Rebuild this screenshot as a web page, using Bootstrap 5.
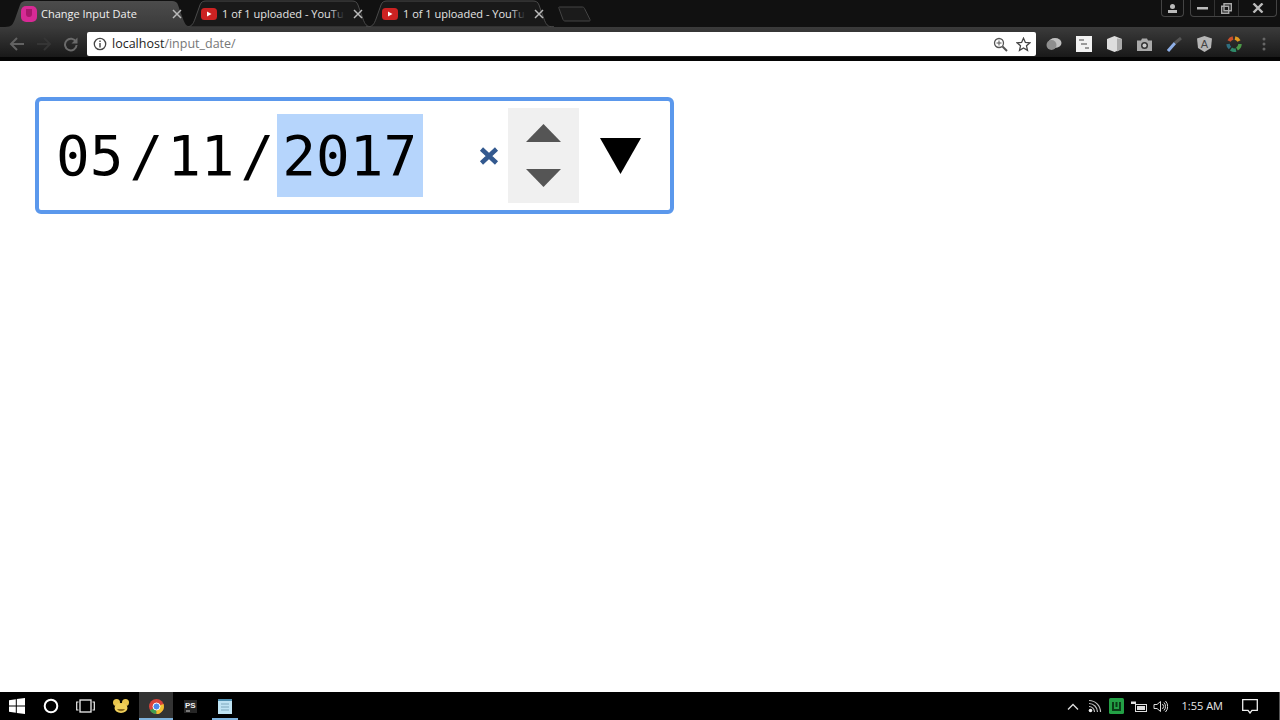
<!DOCTYPE html>
<html lang="en">
<head>
    <meta charset="UTF-8">
    <title>Change Input Date</title>
    <link href="https://cdn.jsdelivr.net/npm/bootstrap@5.3.2/dist/css/bootstrap.min.css" rel="stylesheet">
    <style>
        html, body { height: 720px; overflow: hidden; }
        body { font-family: "Open Sans", "Liberation Sans", sans-serif; background: #fff; }
        svg { display: block; flex: none; }

        /* browser frame */
        .tab-strip { height: 27px; background: #111; padding-left: 5px; }
        .tab-item { position: relative; flex: none; width: 190px; height: 27px; margin-right: -9px; padding: 0 16px; color: #e4e4e4; font-size: 11px; }
        .tab-item.is-active { color: #f0f0f0; z-index: 2; margin-right: -10px; }
        .tab-shape { position: absolute; left: 0; top: 0; }
        .tab-fav { position: relative; margin-right: 5px; }
        .is-active .tab-fav { margin-right: 4px; }
        .tab-label { position: relative; flex: none; width: 123px; padding-top: 1px; white-space: nowrap; }
        .is-active .tab-label { width: 123px; }
        .tab-fade { position: absolute; right: -2px; top: 0; bottom: 0; width: 17px; background: linear-gradient(90deg, rgba(25,25,25,0), #191919 85%); }
        .tab-close { position: relative; margin-left: 8px; }
        .tab-new { margin: 5px 0 0 11px; }
        .win-user { width: 23px; height: 17px; border: 1px solid #444; border-top: 0; border-radius: 0 0 4px 4px; margin-right: 6px; }
        .win-btns { width: 87px; height: 17px; border: 1px solid #444; border-top: 0; border-radius: 0 0 4px 4px; margin-right: 3px; }
        .win-btn { width: 24px; height: 16px; border-right: 1px solid #333; }
        .tool-bar { height: 30px; background: linear-gradient(#3b3b3b, #191919); padding: 5px 0 1px 9px; }
        .nav-ico { flex: none; width: 24px; margin-right: 3px; }
        .omni-box { flex: none; width: 949px; height: 24px; margin-left: -3px; background: #fff; border-radius: 2px; padding: 0 5px 0 6px; font-size: 12.5px; color: #222; }
        .omni-path { color: #777; }
        .omni-url { margin-left: 5px; }
        .ext-row { height: 24px; margin-left: 3px; }
        .ext-slot { width: 30px; }
        .frame-edge { height: 4px; background: #050505; }

        /* date control */
        .date-wrap { margin: 36px 0 0 35px; width: 639px; height: 117px; border: 4px solid #5b98ec; border-radius: 6px; padding-left: 12px; background: #fff; font-family: "DejaVu Sans Mono", "Liberation Mono", monospace; font-size: 56px; line-height: 83px; color: #000; }
        .date-seg { padding: 0 5px; }
        .date-seg.is-selected { background: #b6d5fc; padding: 0 6px 0 5px; margin-left: 4px; }
        .date-sep { margin: 0 -1px 0 1px; }
        .date-clear { margin-left: 56px; }
        .date-spin { width: 71px; height: 95px; margin-left: 9px; background: #f0f0f0; padding: 16px 0; }
        .date-drop { margin-left: 21px; }

        /* taskbar */
        .task-bar { position: absolute; left: 0; right: 0; bottom: 0; height: 28px; background: #000; color: #e8e8e8; font-size: 11px; border-right: 1px solid #555; }
        .task-item { height: 28px; width: 34px; }
        .task-item.is-open { box-shadow: inset 0 -2px 0 #7fb3dd; }
        .task-item.is-current { background: #333; }
        .task-mouse-item { width: 37px; }
        .task-note-item { width: 26px; margin-left: 5px; }
        .tray-slot { width: 22px; }
        .tray-clock { margin-left: 10px; }
        .tray-note { margin: 0 21px 0 19px; }
    </style>
</head>
<body>
    <div class="tab-strip d-flex align-items-start">
        <div class="tab-item is-active d-flex align-items-center">
            <svg class="tab-shape" width="190" height="27"><defs><linearGradient id="tabFill" x1="0" y1="0" x2="0" y2="1"><stop offset="0" stop-color="#4c4c4c"/><stop offset="1" stop-color="#3b3b3b"/></linearGradient></defs><path d="M0 27c7 0 8-3 10-8l5-14c1-3 3-4 6-4h146c3 0 5 1 6 4l5 14c2 5 3 8 10 8z" fill="url(#tabFill)"/></svg>
            <svg class="tab-fav" width="16" height="16"><rect width="16" height="16" rx="5" fill="#d72a95"/><path d="M5 3v5a3 3 0 0 0 6 0V3" fill="#a8176c"/></svg>
            <span class="tab-label">Change Input Date</span>
            <svg class="tab-close" width="10" height="10"><path d="M1 1l8 8M9 1l-8 8" stroke="#bbb" stroke-width="1.500"/></svg>
        </div>
        <div class="tab-item d-flex align-items-center">
            <svg class="tab-shape" width="190" height="27"><path d="M0 27c7 0 8-3 10-8l5-14c1-3 3-4 6-4h146c3 0 5 1 6 4l5 14c2 5 3 8 10 8z" fill="#191919" stroke="#4a4a4a"/></svg>
            <svg class="tab-fav" width="16" height="16"><rect y="2" width="16" height="12" rx="3.500" fill="#cc2222"/><path d="M6 5.500l4.500 2.500-4.500 2.500z" fill="#fff"/></svg>
            <span class="tab-label">1 of 1 uploaded - YouTul<span class="tab-fade"></span></span>
            <svg class="tab-close" width="10" height="10"><path d="M1 1l8 8M9 1l-8 8" stroke="#bbb" stroke-width="1.500"/></svg>
        </div>
        <div class="tab-item d-flex align-items-center">
            <svg class="tab-shape" width="190" height="27"><path d="M0 27c7 0 8-3 10-8l5-14c1-3 3-4 6-4h146c3 0 5 1 6 4l5 14c2 5 3 8 10 8z" fill="#191919" stroke="#4a4a4a"/></svg>
            <svg class="tab-fav" width="16" height="16"><rect y="2" width="16" height="12" rx="3.500" fill="#cc2222"/><path d="M6 5.500l4.500 2.500-4.500 2.500z" fill="#fff"/></svg>
            <span class="tab-label">1 of 1 uploaded - YouTul<span class="tab-fade"></span></span>
            <svg class="tab-close" width="10" height="10"><path d="M1 1l8 8M9 1l-8 8" stroke="#bbb" stroke-width="1.500"/></svg>
        </div>
        <svg class="tab-new" width="34" height="18"><path d="M1.500 2h23c1 0 1.500.5 2 1.500l5.500 11c.5 1 0 1.500-1 1.500H7c-1 0-1.500-.5-2-1.500L1 3.500C.5 2.500.5 2 1.500 2z" fill="#1b1b1b" stroke="#444"/></svg>
        <div class="win-user ms-auto d-flex align-items-center justify-content-center">
            <svg width="11" height="11"><circle cx="5.500" cy="3.500" r="2.500" fill="#bbb"/><path d="M1 7h9v3H1z" fill="#bbb"/></svg>
        </div>
        <div class="win-btns d-flex">
            <div class="win-btn d-flex align-items-center justify-content-center"><svg width="11" height="4"><rect y="1" width="11" height="2.500" fill="#bbb"/></svg></div>
            <div class="win-btn d-flex align-items-center justify-content-center"><svg width="11" height="11"><path d="M3 .7h7.300v7H3zM.7 3.300h7v7h-7z" fill="#181818" stroke="#aaa" stroke-width="1.400"/></svg></div>
            <div class="d-flex align-items-center justify-content-center flex-grow-1"><svg width="12" height="10"><path d="M1.500 .5l9 9M10.500 .5l-9 9" stroke="#bbb" stroke-width="2.400"/></svg></div>
        </div>
    </div>

    <div class="tool-bar d-flex align-items-start">
        <div class="nav-ico"><svg class="mt-1" width="16" height="16"><path d="M15 8H2M8 2L2 8l6 6" fill="none" stroke="#626262" stroke-width="2"/></svg></div>
        <div class="nav-ico"><svg class="mt-1" width="16" height="16"><path d="M1 8h13M8 2l6 6-6 6" fill="none" stroke="#353535" stroke-width="2"/></svg></div>
        <div class="nav-ico"><svg class="mt-1" width="16" height="16"><path d="M13 6a5.800 5.800 0 1 0 .6 3" fill="none" stroke="#6a6a6a" stroke-width="2"/><path d="M14.500 1.500v6h-6z" fill="#6a6a6a"/></svg></div>
        <div class="omni-box d-flex align-items-center">
            <svg width="14" height="14"><circle cx="7" cy="7" r="5.700" fill="none" stroke="#444" stroke-width="1.300"/><path d="M7 6v4.500M7 3.500v1.500" stroke="#444" stroke-width="1.400"/></svg>
            <span class="omni-url">localhost<span class="omni-path">/input_date/</span></span>
            <svg class="ms-auto" width="15" height="15"><circle cx="6" cy="6" r="4.500" fill="none" stroke="#555" stroke-width="1.300"/><path d="M9.500 9.500L14 14" stroke="#555" stroke-width="2"/><path d="M3.500 6h5M6 3.500v5" stroke="#555"/></svg>
            <svg class="ms-2" width="15" height="15"><path d="M7.500 1.200l1.900 4.200 4.500.4-3.400 3 1 4.500-4-2.400-4 2.400 1-4.500-3.400-3 4.500-.4z" fill="none" stroke="#444" stroke-width="1.300"/></svg>
        </div>
        <div class="ext-row d-flex align-items-center">
            <div class="ext-slot d-flex justify-content-center"><svg width="16" height="14"><ellipse cx="9" cy="6" rx="6.500" ry="5" fill="#c0c0c0"/><ellipse cx="5.500" cy="8" rx="5" ry="5" fill="#8e8e8e"/></svg></div>
            <div class="ext-slot d-flex justify-content-center"><svg width="16" height="16"><rect width="16" height="16" fill="#f2f2f2"/><path d="M3 4h5M5 8h6M9 12h4" stroke="#444"/></svg></div>
            <div class="ext-slot d-flex justify-content-center"><svg width="15" height="16"><path d="M7.500 0L15 3v10l-7.500 3L0 13V3z" fill="#ddd"/><path d="M10 2.500L15 3v10l-5 2.500z" fill="#aaa"/></svg></div>
            <div class="ext-slot d-flex justify-content-center"><svg width="15" height="13"><path d="M0 2.500h4L5 .5h5l1 2h4V13H0z" fill="#aaa"/><circle cx="7.500" cy="7.500" r="3.500" fill="#333"/><circle cx="7.500" cy="7.500" r="2" fill="#ccc"/></svg></div>
            <div class="ext-slot d-flex justify-content-center"><svg width="15" height="15"><path d="M1 14l7-8" stroke="#8fb0e8" stroke-width="3"/><path d="M8 6l6-5" stroke="#555" stroke-width="3"/></svg></div>
            <div class="ext-slot d-flex justify-content-center"><svg width="15" height="16"><path d="M7.500 0L15 2.500 14 12l-6.500 4L1 12 0 2.500z" fill="#b5b5b5"/><text x="7.500" y="12" text-anchor="middle" font-size="11" fill="#444" font-family="Liberation Sans">A</text></svg></div>
            <div class="ext-slot d-flex justify-content-center"><svg width="16" height="16"><g fill="none" stroke-width="3.500"><path d="M3 5A6 6 0 0 1 7 2" stroke="#c9502c"/><path d="M9 2a6 6 0 0 1 4 3" stroke="#e09a20"/><path d="M14 8a6 6 0 0 1-3 5" stroke="#4c9a48"/><path d="M10 14a6 6 0 0 1-5-1" stroke="#2f8a6a"/><path d="M4 12a6 6 0 0 1-2-4" stroke="#2f6f80"/></g></svg></div>
            <div class="ext-slot d-flex justify-content-center"><svg width="4" height="14"><circle cx="2" cy="2" r="1.500" fill="#666"/><circle cx="2" cy="7" r="1.500" fill="#666"/><circle cx="2" cy="12" r="1.500" fill="#666"/></svg></div>
        </div>
    </div>
    <div class="frame-edge"></div>

    <div class="date-wrap d-flex align-items-center">
        <span class="date-seg">05</span><span class="date-sep">/</span><span class="date-seg">11</span><span class="date-sep">/</span><span class="date-seg is-selected">2017</span>
        <svg class="date-clear" width="20" height="20" viewBox="0 0 20 20"><path d="M2.500 3l15 14M17.500 3l-15 14" stroke="#33598f" stroke-width="4.500"/></svg>
        <div class="date-spin d-flex flex-column justify-content-between align-items-center">
            <svg width="35" height="18"><path d="M17.500 0L35 18H0z" fill="#555"/></svg>
            <svg width="35" height="18"><path d="M0 0h35L17.500 18z" fill="#555"/></svg>
        </div>
        <svg class="date-drop" width="41" height="36"><path d="M0 0h41L20.500 36z" fill="#000"/></svg>
    </div>

    <div class="task-bar d-flex align-items-center">
        <div class="task-item d-flex align-items-center justify-content-center"><svg width="16" height="16"><path d="M0 2.300L6.800 1.300v6.300H0zM7.800 1.100L16 0v7.600H7.800zM0 8.500h6.800v6.300L0 13.700zM7.800 8.500H16V16l-8.200-1.100z" fill="#fff"/></svg></div>
        <div class="task-item d-flex align-items-center justify-content-center"><svg width="16" height="16"><circle cx="8" cy="8" r="6.300" fill="none" stroke="#fff" stroke-width="2"/></svg></div>
        <div class="task-item d-flex align-items-center justify-content-center"><svg width="19" height="14"><rect x="4" y="1" width="11" height="12" fill="none" stroke="#eee" stroke-width="1.300"/><path d="M2.500 3H.7v8h1.800M16.500 3h1.800v8h-1.800" fill="none" stroke="#eee" stroke-width="1.200"/></svg></div>
        <div class="task-item task-mouse-item d-flex align-items-center justify-content-center"><svg width="16" height="14"><circle cx="3.500" cy="3.500" r="3.500" fill="#e8c44c"/><circle cx="12.500" cy="3.500" r="3.500" fill="#e8c44c"/><ellipse cx="8" cy="9" rx="6.500" ry="5" fill="#efcf5a"/><path d="M4 10c2 3 6 3 8 0z" fill="#8a6a1c"/></svg></div>
        <div class="task-item is-open is-current d-flex align-items-center justify-content-center"><svg width="15" height="15"><circle cx="7.500" cy="7.500" r="7.500" fill="#d8443a"/><path d="M7.500 7.500L1 11.200A7.500 7.500 0 0 0 7.500 15z" fill="#3f9f4f"/><path d="M7.500 7.500V15A7.500 7.500 0 0 0 14.500 5z" fill="#f0c230"/><circle cx="7.500" cy="7.500" r="3.500" fill="#4a88e8" stroke="#fff"/></svg></div>
        <div class="task-item d-flex align-items-center justify-content-center"><svg width="13" height="13"><rect width="13" height="13" fill="#262626"/><text x="1" y="8" font-size="8" font-weight="700" fill="#eee" font-family="Liberation Sans">PS</text><path d="M2 11h4" stroke="#ccc"/></svg></div>
        <div class="task-item task-note-item is-open d-flex align-items-center justify-content-center"><svg width="14" height="16"><rect y="1" width="14" height="15" fill="#bfe3f3"/><path d="M0 1h14v2H0z" fill="#4f8fb0"/><path d="M3 6h8M3 9h8M3 12h8" stroke="#7fa8bd"/></svg></div>

        <div class="ms-auto d-flex align-items-center">
            <div class="tray-slot d-flex justify-content-center"><svg width="12" height="7"><path d="M1 6.500l5-5 5 5" fill="none" stroke="#ddd" stroke-width="1.300"/></svg></div>
            <div class="tray-slot d-flex justify-content-center"><svg width="14" height="14"><circle cx="2.500" cy="11.500" r="1.800" fill="#eee"/><path d="M1 7.500a5.500 5.500 0 0 1 5.500 5.500M1 4.500a8.500 8.500 0 0 1 8.500 8.500M1 1.500a11.500 11.500 0 0 1 11.500 11.500" fill="none" stroke="#bbb" stroke-width="1.200"/></svg></div>
            <div class="tray-slot d-flex justify-content-center"><svg width="15" height="16"><rect width="15" height="16" rx="1.500" fill="#23a045"/><path d="M4 4v8h7V4M7.500 4v5" fill="none" stroke="#0b3d18" stroke-width="2"/></svg></div>
            <div class="tray-slot d-flex justify-content-center"><svg width="16" height="11"><rect x="4.500" y="3.500" width="11" height="7" fill="none" stroke="#ddd"/><rect x="6" y="5" width="8" height="4" fill="#ddd"/><path d="M0 .5h5v2.500H0z" fill="#ddd"/></svg></div>
            <div class="tray-slot d-flex justify-content-center"><svg width="15" height="13"><path d="M1 4.500h3L7.500 1.500v10L4 8.500H1z" fill="none" stroke="#ddd"/><path d="M9.500 4a3.500 3.500 0 0 1 0 5M11 2.500a6 6 0 0 1 0 8M12.500 1a8 8 0 0 1 0 11" fill="none" stroke="#ddd"/></svg></div>
            <span class="tray-clock">1:55 AM</span>
        </div>
        <svg class="tray-note" width="16" height="15"><path d="M.7.7h14.600v10.600H10L8 14l-2-2.700H.7z" fill="none" stroke="#eee" stroke-width="1.300"/></svg>
    </div>
</body>
</html>
